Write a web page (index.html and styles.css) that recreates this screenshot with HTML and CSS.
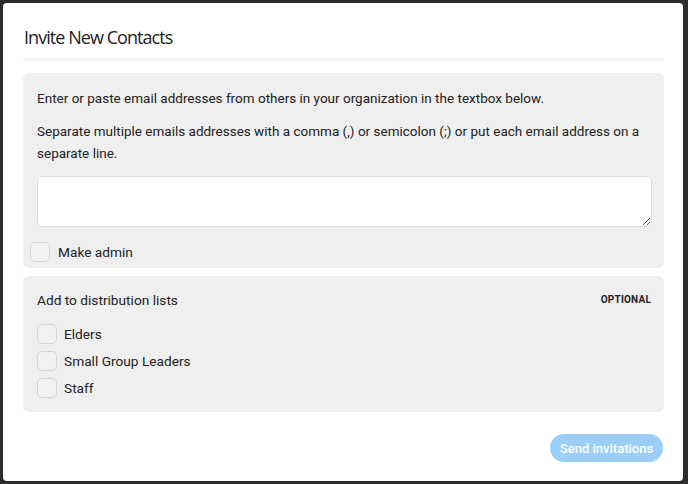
FILE: index.html
```html
<!DOCTYPE html>
<html lang="en">
<head>
<meta charset="UTF-8">
<title>Invite New Contacts</title>
<link rel="stylesheet" href="styles.css">
</head>
<body>
<div class="modal">
  <h1 class="modal-title">Invite New Contacts</h1>
  <div class="panel panel-emails">
    <p>Enter or paste email addresses from others in your organization in the textbox below.</p>
    <p>Separate multiple emails addresses with a comma (,) or semicolon (;) or put each email address on a separate line.</p>
    <textarea class="emails"></textarea>
    <label class="check check-admin"><span class="box"></span>Make admin</label>
  </div>
  <div class="panel panel-lists">
    <div class="lists-head">
      <span>Add to distribution lists</span>
      <span class="optional">OPTIONAL</span>
    </div>
    <div class="lists">
      <label class="check"><span class="box"></span>Elders</label>
      <label class="check"><span class="box"></span>Small Group Leaders</label>
      <label class="check"><span class="box"></span>Staff</label>
    </div>
  </div>
  <div class="actions">
    <button class="btn-send">Send invitations</button>
  </div>
</div>
</body>
</html>
```

FILE: styles.css
```css
html, body { margin: 0; padding: 0; background: #2c2c2c; font-family: Roboto, "Liberation Sans", sans-serif; color: #222; }
body { padding: 3px; }
.modal { width: 680px; height: 478px; box-sizing: border-box; background: #fff; border-radius: 4px; padding: 0 19px 0 20px; overflow: hidden; }
.modal-title { margin: 0; padding: 22px 0 10px 1px; font-family: "Open Sans", sans-serif; font-weight: 400; font-size: 18px; line-height: 24px; letter-spacing: -0.95px; color: #222; border-bottom: 1px solid #ececec; }
.panel { background: #efefef; border-radius: 6px; padding: 14px; font-size: 13.7px; line-height: 22px; }
.panel-emails { margin-top: 13px; padding-bottom: 6px; display: flex; flex-direction: column; }
.panel-emails p { margin: 0; font-size: 13.5px; }
.panel-emails p + p { margin-top: 11px; }
.emails { margin: 12px -2px 0 0; height: 51px; box-sizing: border-box; border: 1px solid #dcdcdc; border-radius: 5px; background: #fff; resize: vertical; font: inherit; }
.check { display: flex; align-items: center; gap: 7px; height: 20px; }
.box { width: 20px; height: 20px; box-sizing: border-box; border: 1px solid #d6d6d6; border-radius: 5px; background: #f1f1f1; }
.check-admin { margin: 15px 0 0 -7px; gap: 8px; }
.panel-lists { margin-top: 8px; padding: 13px 14px 14px; }
.lists-head { display: flex; justify-content: space-between; align-items: center; }
.optional { font-size: 10px; font-weight: 700; letter-spacing: 0.2px; margin-right: -1px; }
.lists { margin-top: 13px; display: flex; flex-direction: column; gap: 7px; }
.actions { display: flex; justify-content: flex-end; margin-top: 22px; padding-right: 1px; }
.btn-send { height: 28px; width: 113px; border: none; border-radius: 14px; background: #9ccff8; color: #fff; font-family: Roboto, sans-serif; font-size: 13px; font-weight: 500; padding: 0; }
```
